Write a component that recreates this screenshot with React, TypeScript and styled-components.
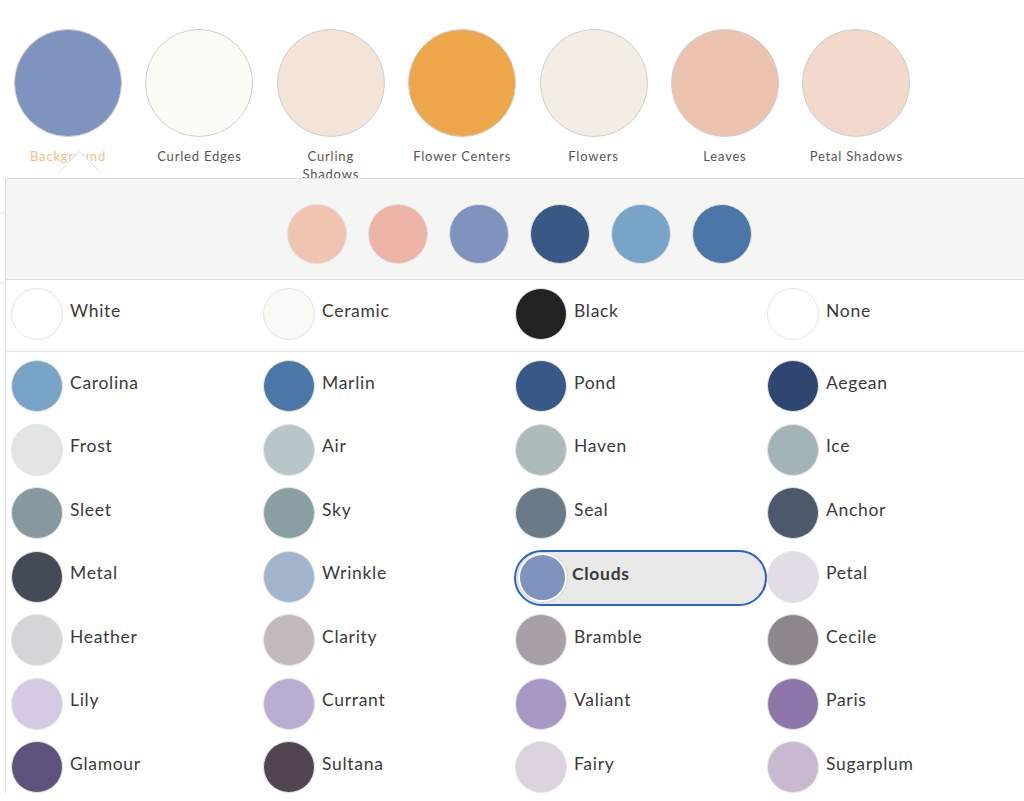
import React from "react";
import styled, { createGlobalStyle } from "styled-components";

const Global = createGlobalStyle`
  html, body { margin: 0; padding: 0; background: #ffffff; overflow: hidden; }
  body { font-family: Lato, "Noto Sans", sans-serif; width: 1024px; height: 801px; }
`;

const Page = styled.div`
  width: 1024px;
  height: 801px;
  overflow: hidden;
  position: relative;
`;

const EdgeLine = styled.div<{ $top: number }>`
  position: absolute;
  left: 0;
  top: ${(p) => p.$top}px;
  width: 6px;
  height: 1px;
  background: #e4e4e4;
`;

const TopRow = styled.div`
  display: flex;
  align-items: flex-start;
  gap: 23.4px;
  padding: 29px 0 0 14px;
  height: 178px;
  box-sizing: border-box;
`;

const TopItem = styled.div`
  width: 108px;
  display: flex;
  flex-direction: column;
  align-items: center;
  flex-shrink: 0;
`;

const TopCircle = styled.div<{ $c: string }>`
  width: 108px;
  height: 108px;
  flex-shrink: 0;
  border-radius: 50%;
  background: ${(p) => p.$c};
  border: 1.5px solid #cfcfcf;
  box-sizing: border-box;
`;

const TopLabel = styled.div<{ $active?: boolean }>`
  margin-top: 10px;
  max-width: 102px;
  text-align: center;
  font-size: 13px;
  line-height: 18px;
  letter-spacing: 0.8px;
  color: ${(p) => (p.$active ? "#f0c184" : "#555555")};
`;

const Panel = styled.div`
  position: relative;
  z-index: 1;
  margin-left: 5px;
  width: 1026px;
  background: #ffffff;
  border-left: 1px solid #dedede;
  border-top: 1px solid #dedede;
  &::before {
    content: "";
    position: absolute;
    left: 58px;
    top: -22px;
    width: 30px;
    height: 30px;
    background: #ffffff;
    border-top: 1px solid #dedede;
    border-left: 1px solid #dedede;
    transform: rotate(45deg);
    clip-path: polygon(0 0, 100% 0, 0 100%);
  }
`;

const Recent = styled.div`
  background: #f5f5f3;
  height: 101px;
  box-sizing: border-box;
  padding-top: 25px;
  display: flex;
  justify-content: center;
  gap: 21px;
  border-bottom: 1px solid #dfdfdf;
`;

const SmallCircle = styled.div<{ $c: string }>`
  width: 60px;
  height: 60px;
  border-radius: 50%;
  background: ${(p) => p.$c};
  border: 1px solid #e2e2e2;
  box-sizing: border-box;
`;

const Basics = styled.div`
  display: grid;
  grid-template-columns: repeat(4, 252px);
  padding: 8px 0 11px 5px;
  border-bottom: 1px solid #e6e6e6;
`;

const Colors = styled.div`
  display: grid;
  grid-template-columns: repeat(4, 252px);
  row-gap: 11.5px;
  padding: 8px 0 0 5px;
`;

const Item = styled.div<{ $selected?: boolean }>`
  display: flex;
  align-items: center;
  gap: 7px;
  height: 52px;
  box-sizing: border-box;
  ${(p) =>
    p.$selected
      ? `
    height: 56px;
    margin: -1px 0 -3px -1px;
    padding-left: 2px;
    gap: 5px;
    border: 2.5px solid #2a63c9;
    border-radius: 28px;
    background: #e9e9e9;
  `
      : ""}
`;

const Swatch = styled.div<{ $c: string; $selected?: boolean }>`
  width: 52px;
  height: 52px;
  flex-shrink: 0;
  border-radius: 50%;
  background: ${(p) => p.$c};
  border: 1.5px solid #e4e4e4;
  box-sizing: border-box;
  ${(p) =>
    p.$selected
      ? `
    width: 49px;
    height: 49px;
    border: 2px solid #ffffff;
    box-shadow: 0 0 0 1px #d6d6d6;
  `
      : ""}
`;

const Name = styled.span<{ $selected?: boolean }>`
  font-size: 17.5px;
  letter-spacing: 0.7px;
  color: #3a3a3a;
  padding-bottom: 8px;
  font-weight: ${(p) => (p.$selected ? 700 : 400)};
`;

const top = [
  ["Background", "#7f93bf"],
  ["Curled Edges", "#fafcf6"],
  ["Curling Shadows", "#f4e4d7"],
  ["Flower Centers", "#eda64a"],
  ["Flowers", "#f3ede6"],
  ["Leaves", "#ecc3af"],
  ["Petal Shadows", "#f2d9cc"],
];

const recent = ["#efc4b0", "#eeb3a7", "#7f93bf", "#385885", "#78a4c8", "#4a76a8"];

const basics = [
  ["White", "#ffffff"],
  ["Ceramic", "#f8fbf5"],
  ["Black", "#222222"],
  ["None", "#ffffff"],
];

const colors = [
  ["Carolina", "#78a4c8"],
  ["Marlin", "#4a76a8"],
  ["Pond", "#385885"],
  ["Aegean", "#2e4670"],
  ["Frost", "#e1e5e4"],
  ["Air", "#b8c5ca"],
  ["Haven", "#adbbbb"],
  ["Ice", "#a3b4b8"],
  ["Sleet", "#88989f"],
  ["Sky", "#899fa3"],
  ["Seal", "#6a7a87"],
  ["Anchor", "#4b596b"],
  ["Metal", "#444a56"],
  ["Wrinkle", "#a2b4cb"],
  ["Clouds", "#7f93bf"],
  ["Petal", "#e1dde7"],
  ["Heather", "#d5d4d6"],
  ["Clarity", "#c3b9bd"],
  ["Bramble", "#a99fa9"],
  ["Cecile", "#8f858f"],
  ["Lily", "#d6cae2"],
  ["Currant", "#b9aed2"],
  ["Valiant", "#a997c6"],
  ["Paris", "#8f76aa"],
  ["Glamour", "#5f527f"],
  ["Sultana", "#524452"],
  ["Fairy", "#ddd2e0"],
  ["Sugarplum", "#c8b8d0"],
];

const SELECTED = "Clouds";

export default function App() {
  return (
    <Page>
      <Global />
      <EdgeLine $top={212} />
      <EdgeLine $top={283} />
      <TopRow>
        {top.map(([name, c], i) => (
          <TopItem key={name}>
            <TopCircle $c={c} />
            <TopLabel $active={i === 0}>{name}</TopLabel>
          </TopItem>
        ))}
      </TopRow>
      <Panel>
        <Recent>
          {recent.map((c, i) => (
            <SmallCircle key={i} $c={c} />
          ))}
        </Recent>
        <Basics>
          {basics.map(([name, c]) => (
            <Item key={name}>
              <Swatch $c={c} />
              <Name>{name}</Name>
            </Item>
          ))}
        </Basics>
        <Colors>
          {colors.map(([name, c]) => {
            const sel = name === SELECTED;
            return (
              <Item key={name} $selected={sel}>
                <Swatch $c={c} $selected={sel} />
                <Name $selected={sel}>{name}</Name>
              </Item>
            );
          })}
        </Colors>
      </Panel>
    </Page>
  );
}
